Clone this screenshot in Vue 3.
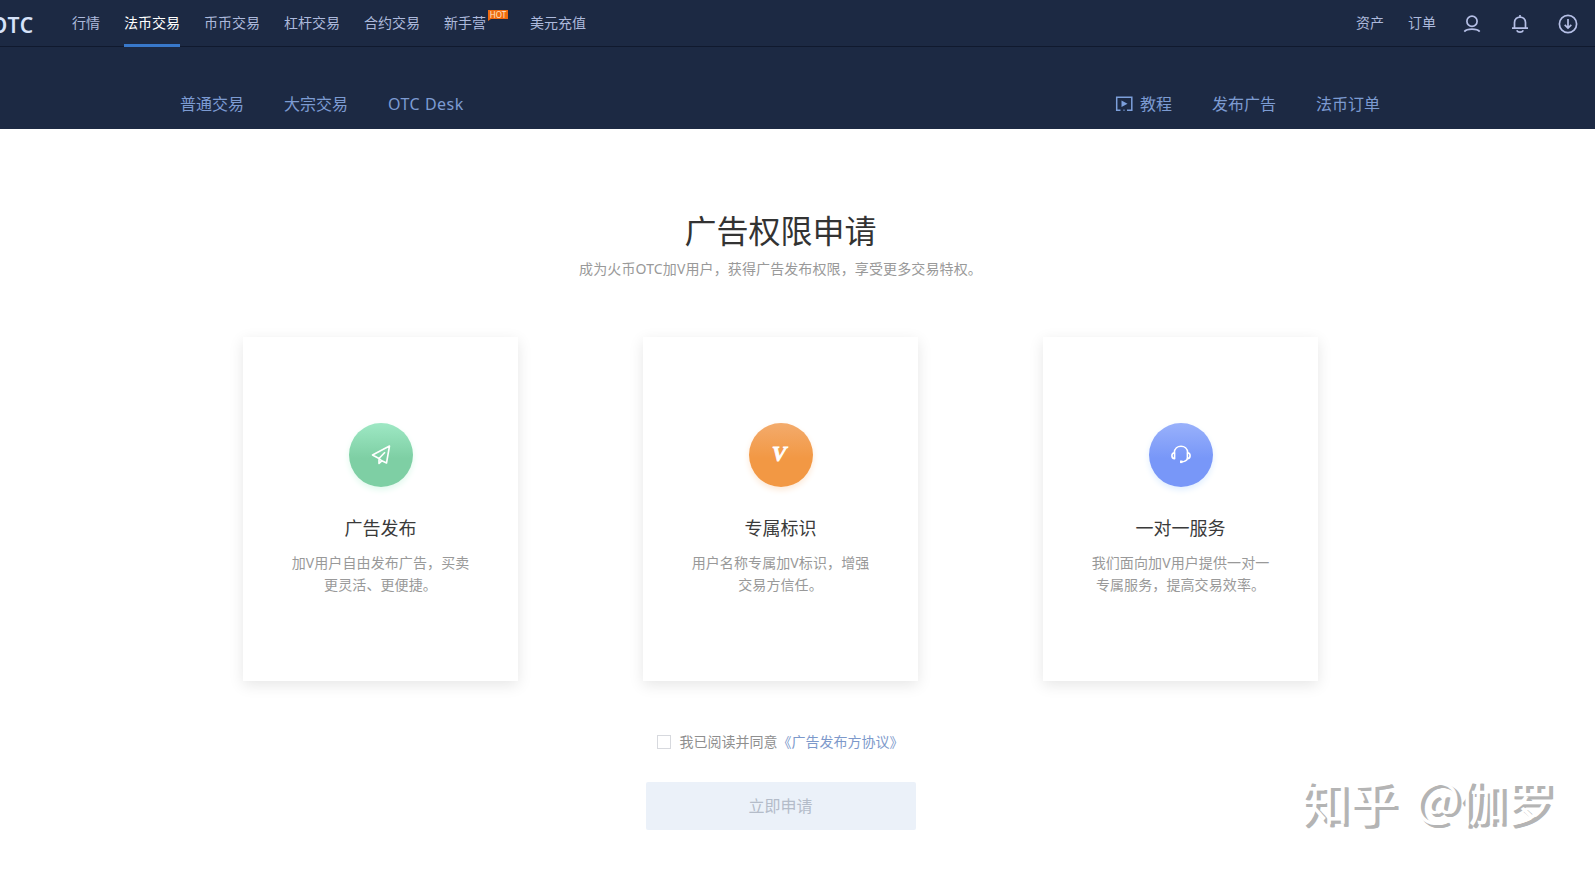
<script setup>
const nav = [
  { label: '行情' },
  { label: '法币交易', active: true },
  { label: '币币交易' },
  { label: '杠杆交易' },
  { label: '合约交易' },
  { label: '新手营', hot: true },
  { label: '美元充值' },
]
const cards = [
  { kind: 'publish', title: '广告发布', lines: ['加V用户自由发布广告，买卖', '更灵活、更便捷。'] },
  { kind: 'badge', title: '专属标识', lines: ['用户名称专属加V标识，增强', '交易方信任。'] },
  { kind: 'service', title: '一对一服务', lines: ['我们面向加V用户提供一对一', '专属服务，提高交易效率。'] },
]
</script>

<template>
  <div class="page">
    <header class="topbar">
      <div class="logo"><span>OTC</span></div>
      <nav class="nav">
        <a v-for="n in nav" :key="n.label" class="nav-item" :class="{ active: n.active, wide: n.hot }">
          {{ n.label }}
          <span v-if="n.hot" class="hot">HOT</span>
        </a>
      </nav>
      <div class="tools">
        <a>资产</a>
        <a>订单</a>
        <svg class="tool" viewBox="0 0 20 20"><circle cx="10" cy="7.3" r="5.1" /><path d="M2.3 17.6C5 14.4 15 14.4 17.7 17.6" /></svg>
        <svg class="tool" viewBox="0 0 20 20"><path d="M4.500 14V8.600C4.500 1.200 15.500 1.200 15.500 8.600V14M2 14.200H18M10 1V3M6.700 16.300C8 18.700 12 18.700 13.300 16.300" /></svg>
        <svg class="tool" viewBox="0 0 20 20"><circle cx="10" cy="10" r="8.600" /><path d="M10 5V14M6.700 10.800L10 14L13.300 10.800" /></svg>
      </div>
    </header>

    <div class="subbar">
      <div class="subinner">
        <a>普通交易</a>
        <a>大宗交易</a>
        <a class="desk">OTC Desk</a>
        <a class="tutorial">
          <svg viewBox="0 0 18 16"><path d="M5.500 14.200H1.700V1.200H16.800V14.200H12M8.500 14.200H9.500" /><path class="fill" d="M6.500 4.500L12.500 7.700L6.500 11Z" /></svg>
          教程
        </a>
        <a>发布广告</a>
        <a>法币订单</a>
      </div>
    </div>

    <main class="main">
      <h1>广告权限申请</h1>
      <p class="lead">成为火币OTC加V用户，获得广告发布权限，享受更多交易特权。</p>

      <div class="cards">
        <section v-for="c in cards" :key="c.kind" class="card">
          <div class="disc" :class="c.kind">
            <svg v-if="c.kind === 'publish'" viewBox="0 0 20 20"><path d="M1.500 10L18.500 1L15.500 18L10.800 15.800L8 18.500V13.500L1.500 10ZM8 13.500L14 7.200M10.800 15.800L8 13.500" /></svg>
            <span v-else-if="c.kind === 'badge'" class="vee">V</span>
            <svg v-else viewBox="0 0 20 20"><path d="M3.300 7.800C3.600 -1 16.400 -1 16.700 7.800M16.500 13.500C15.500 16 13.500 16.800 10.500 16.800" /><path d="M3.600 7.800C0 8 0 13.600 3.600 13.800ZM16.400 7.800C20 8 20 13.600 16.400 13.800Z" /><path class="mic" d="M9 16.800H11.500" /></svg>
          </div>
          <h2>{{ c.title }}</h2>
          <p v-for="l in c.lines" :key="l">{{ l }}</p>
        </section>
      </div>

      <label class="agree"><i class="box"></i><span>我已阅读并同意</span><a>《广告发布方协议》</a></label>
      <button class="apply" disabled>立即申请</button>
    </main>

    <div class="watermark">知乎 <span class="at">@</span>伽罗</div>
  </div>
</template>

<style>
body { background: #fff; overflow: hidden; }
</style>

<style scoped>
.page {
  position: relative;
  width: 1595px;
  height: 870px;
  overflow: hidden;
  background: #fff;
  font-family: "Noto Sans", "Noto Sans CJK SC", sans-serif;
  font-size: 14px;
}
.topbar {
  box-sizing: border-box;
  display: flex;
  height: 47px;
  background: #1c2943;
  border-bottom: 1px solid #10192e;
  color: #adb9dc;
}
.logo {
  display: flex;
  justify-content: flex-end;
  width: 34px;
  margin-right: 38px;
  overflow: hidden;
  font-size: 21px;
  font-weight: 600;
  letter-spacing: 0.8px;
  line-height: 51px;
  color: #d6e2f9;
}
.nav { display: flex; gap: 24px; }
.nav-item {
  position: relative;
  height: 47px;
  line-height: 46px;
  white-space: nowrap;
}
.nav-item.wide { margin-right: 20px; }
.nav-item.active { color: #fff; }
.nav-item.active::after {
  content: "";
  position: absolute;
  left: 0;
  right: 0;
  bottom: 0;
  height: 3px;
  background: #3878cb;
}
.hot {
  position: absolute;
  left: 44px;
  top: 10px;
  width: 20px;
  height: 9px;
  background: #ee6b10;
  color: #ffe9c9;
  font-size: 8px;
  line-height: 9px;
  text-align: center;
}
.hot::after {
  content: "";
  position: absolute;
  left: 0;
  top: 9px;
  border-top: 2px solid #ee6b10;
  border-right: 3px solid transparent;
}
.tools {
  display: flex;
  align-items: center;
  margin-left: auto;
  padding-right: 17px;
  line-height: 46px;
}
.tools a { margin-right: 24px; }
.tool {
  width: 20px;
  height: 20px;
  margin: 2px 0 0 28px;
  fill: none;
  stroke: #b5bfe6;
  stroke-width: 1.7;
}
.tools a + .tool { margin-left: 2px; }
.subbar { height: 82px; background: #1c2943; }
.subinner {
  display: flex;
  gap: 40px;
  width: 1200px;
  margin-left: 180px;
  padding-top: 45px;
  font-size: 16px;
  line-height: 24px;
  color: #7c9bd2;
}
.desk { letter-spacing: 0.5px; }
.tutorial { display: flex; align-items: center; margin-left: auto; }
.tutorial svg {
  width: 18px;
  height: 16px;
  margin-right: 7px;
  fill: none;
  stroke: #7c9fdb;
  stroke-width: 1.5;
}
.tutorial .fill { fill: #7c9fdb; stroke: none; }
.main {
  display: flex;
  flex-direction: column;
  align-items: center;
  width: 1561px;
  padding-top: 78px;
}
h1 {
  margin: 0;
  font-size: 32px;
  font-weight: 400;
  line-height: 48px;
  color: #333;
}
.lead {
  margin: 3px 0 0;
  line-height: 22px;
  letter-spacing: 0.12px;
  color: #999;
}
.cards { display: flex; gap: 125px; margin-top: 57px; }
.card {
  box-sizing: border-box;
  display: flex;
  flex-direction: column;
  align-items: center;
  width: 275px;
  height: 344px;
  padding-top: 86px;
  background: #fff;
  box-shadow: 0 4px 14px rgba(0, 0, 0, 0.1);
}
.disc {
  display: flex;
  align-items: center;
  justify-content: center;
  width: 64px;
  height: 64px;
  border-radius: 50%;
}
.disc svg {
  width: 20px;
  height: 20px;
  margin-top: -1px;
  fill: none;
  stroke: #fff;
  stroke-width: 1.6;
  stroke-linejoin: round;
}
.disc .mic { stroke-width: 2.6; }
.publish { background: linear-gradient(#9ee8c4, #7ecfa4 55%); box-shadow: 0 3px 6px #e0f9ed; }
.badge { background: linear-gradient(#f3ab6c, #f29844 55%); box-shadow: 0 3px 6px #fce8d6; }
.service { background: linear-gradient(#99b1fb, #7897f8 55%); box-shadow: 0 3px 6px #dfeeff; }
.vee {
  margin: -3px 0 0 -3px;
  font: italic 700 22px/36px "Liberation Serif", serif;
  color: #fff;
  -webkit-text-stroke: 0.8px #fff;
}
h2 {
  margin: 27px 0 10px;
  font-size: 18px;
  font-weight: 400;
  line-height: 28px;
  color: #3a3a3a;
}
.card p {
  margin: 0;
  line-height: 22px;
  letter-spacing: 0.1px;
  color: #999;
  white-space: nowrap;
}
.agree {
  display: flex;
  align-items: center;
  margin: 50px 0 0 -1px;
  line-height: 22px;
  color: #8f8f8f;
}
.box {
  box-sizing: border-box;
  width: 14px;
  height: 14px;
  margin-right: 9px;
  border: 1px solid #d7d9de;
}
.agree a { color: #7d99cb; }
.apply {
  width: 270px;
  height: 48px;
  margin-top: 29px;
  padding: 0 0 2px;
  border: 0;
  border-radius: 2px;
  background: #ebf1f9;
  color: #b4bcc9;
  font: inherit;
  font-size: 16px;
}
.watermark {
  position: absolute;
  left: 1301px;
  top: 764px;
  color: #fff;
  font-family: "Noto Sans CJK SC", sans-serif;
  font-size: 48px;
  line-height: 72px;
  word-spacing: 6px;
  white-space: nowrap;
  text-shadow: 3px 3px 0 #b4b4b4, 4px 3px 0 #b4b4b4;
}
.at {
  display: inline-block;
  margin: 0 -2px 0 1px;
  line-height: 1;
  transform: translateY(-4px);
}
</style>
